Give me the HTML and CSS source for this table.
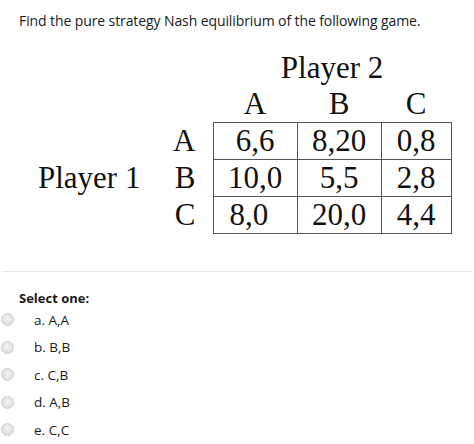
FILE: index.html
```html
<!DOCTYPE html>
<html>
<head>
<meta charset="utf-8">
<link rel="stylesheet" href="styles.css">
</head>
<body>
<div class="question">
  <p class="prompt">Find the pure strategy Nash equilibrium of the following game.</p>
  <table class="game">
    <colgroup>
      <col class="col-p1">
      <col class="col-rl">
      <col class="col-a">
      <col class="col-b">
      <col class="col-c">
    </colgroup>
    <tr>
      <td class="p1"></td>
      <td class="rl"></td>
      <td class="p2" colspan="3">Player 2</td>
    </tr>
    <tr>
      <td class="p1"></td>
      <td class="rl"></td>
      <td class="ch">A</td>
      <td class="ch">B</td>
      <td class="ch">C</td>
    </tr>
    <tr>
      <td class="p1"></td>
      <td class="rl">A</td>
      <td class="cell">6,6</td>
      <td class="cell">8,20</td>
      <td class="cell">0,8</td>
    </tr>
    <tr>
      <td class="p1">Player 1</td>
      <td class="rl">B</td>
      <td class="cell">10,0</td>
      <td class="cell">5,5</td>
      <td class="cell">2,8</td>
    </tr>
    <tr>
      <td class="p1"></td>
      <td class="rl">C</td>
      <td class="cell left">8,0</td>
      <td class="cell">20,0</td>
      <td class="cell">4,4</td>
    </tr>
  </table>
</div>
<hr class="sep">
<div class="answers">
  <div class="select">Select one:</div>
  <label class="opt"><span class="radio"></span><span class="txt">a. A,A</span></label>
  <label class="opt"><span class="radio"></span><span class="txt">b. B,B</span></label>
  <label class="opt"><span class="radio"></span><span class="txt">c. C,B</span></label>
  <label class="opt"><span class="radio"></span><span class="txt">d. A,B</span></label>
  <label class="opt"><span class="radio"></span><span class="txt">e. C,C</span></label>
</div>
</body>
</html>
```
FILE: styles.css
```css
html, body {
  margin: 0;
  padding: 0;
  background: #fff;
}
body {
  font-family: "Open Sans", "Noto Sans", sans-serif;
  color: #1a1a1a;
  width: 474px;
  height: 444px;
  overflow: hidden;
}
.question {
  padding: 0 0 0 19px;
}
.prompt {
  margin: 0;
  padding-top: 11px;
  font-size: 14px;
  line-height: 20px;
  letter-spacing: -0.1px;
}
.game {
  border-collapse: collapse;
  table-layout: fixed;
  width: 432px;
  margin-top: 19px;
  font-family: "Liberation Serif", "Times New Roman", serif;
  font-size: 31px;
  color: #111;
}
.col-p1 { width: 151px; }
.col-rl { width: 43px; }
.col-a { width: 84px; }
.col-b { width: 84px; }
.col-c { width: 70px; }
.game td {
  height: 36px;
  padding: 0;
  line-height: 36px;
  text-align: center;
  vertical-align: middle;
  white-space: nowrap;
}
.game td.p1 {
  text-align: left;
  padding-left: 19px;
}
.game td.rl {
  text-align: right;
  padding-right: 17px;
}
.cell {
  border: 1.5px solid #555;
}
.game td.left {
  text-align: left;
  padding-left: 16px;
}
.sep {
  margin: 37px 1px 0 3px;
  border: 0;
  border-top: 1px solid #e3e3e3;
  height: 0;
}
.answers {
  padding-top: 17px;
}
.select {
  padding-left: 19px;
  font-weight: bold;
  font-size: 13px;
  line-height: 18px;
  margin-bottom: -1px;
}
.opt {
  display: flex;
  align-items: center;
  height: 27.5px;
  font-size: 13.5px;
}
.radio {
  width: 11px;
  height: 11px;
  border-radius: 50%;
  border: 1px solid #cdcdcd;
  background: radial-gradient(circle at 50% 40%, #f2f2f2 0%, #e0e0e0 70%, #d3d3d3 100%);
  margin-left: 1px;
  flex: none;
}
.txt {
  margin-left: 20px;
}
```
